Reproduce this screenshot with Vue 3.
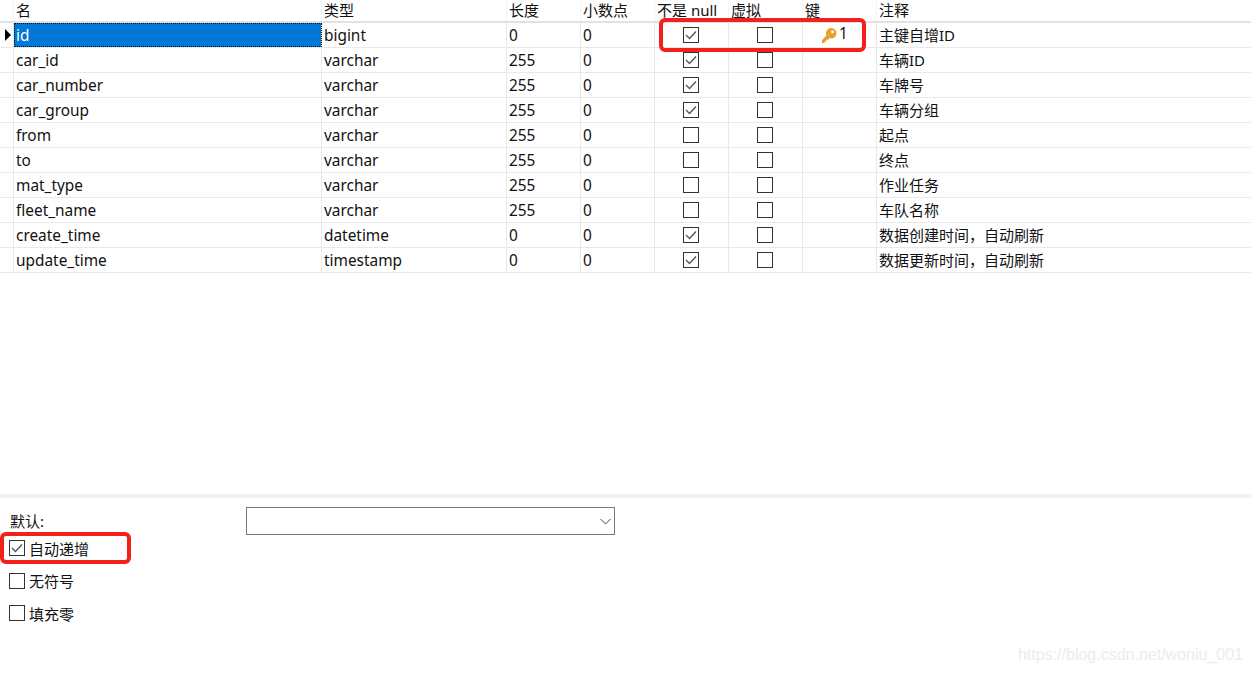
<script setup>
const headers = ['名', '类型', '长度', '小数点', '不是 null', '虚拟', '键', '注释']
const rows = [
  { name: 'id', type: 'bigint', len: 0, notNull: true, key: true, note: '主键自增ID' },
  { name: 'car_id', type: 'varchar', len: 255, notNull: true, note: '车辆ID' },
  { name: 'car_number', type: 'varchar', len: 255, notNull: true, note: '车牌号' },
  { name: 'car_group', type: 'varchar', len: 255, notNull: true, note: '车辆分组' },
  { name: 'from', type: 'varchar', len: 255, notNull: false, note: '起点' },
  { name: 'to', type: 'varchar', len: 255, notNull: false, note: '终点' },
  { name: 'mat_type', type: 'varchar', len: 255, notNull: false, note: '作业任务' },
  { name: 'fleet_name', type: 'varchar', len: 255, notNull: false, note: '车队名称' },
  { name: 'create_time', type: 'datetime', len: 0, notNull: true, note: '数据创建时间，自动刷新' },
  { name: 'update_time', type: 'timestamp', len: 0, notNull: true, note: '数据更新时间，自动刷新' },
]
const options = [
  { label: '自动递增', checked: true },
  { label: '无符号', checked: false },
  { label: '填充零', checked: false },
]
</script>

<template>
  <div class="page">
    <section class="grid">
      <div class="row head">
        <div class="cell marker"></div>
        <div v-for="h in headers" :key="h" class="cell">{{ h }}</div>
      </div>
      <div v-for="(r, i) in rows" :key="r.name" class="row">
        <div class="cell marker"><span v-if="i === 0" class="arrow"></span></div>
        <div class="cell latin" :class="{ selected: i === 0 }">{{ r.name }}</div>
        <div class="cell latin">{{ r.type }}</div>
        <div class="cell latin">{{ r.len }}</div>
        <div class="cell latin">0</div>
        <div class="cell center">
          <span class="box">
            <svg v-if="r.notNull" width="14" height="14" viewBox="0 0 14 14"><path d="M2 7 L5.5 10.5 L12 3.5" fill="none" stroke="#555" stroke-width="1.4" /></svg>
          </span>
        </div>
        <div class="cell center"><span class="box"></span></div>
        <div class="cell keycell">
          <template v-if="r.key">
            <svg class="key" width="16" height="17" viewBox="0 0 16 17">
              <path fill="#e8a02c" fill-rule="evenodd" d="M10.3 1a5.2 5.2 0 0 1 0 10.4c-.6 0-1.2-.1-1.7-.3L7 12.7H5.4v1.6H3.8V16H1V13.3L5.4 8.2A5.2 5.2 0 0 1 10.3 1Zm1.3 2.3a1.5 1.5 0 1 0 0 3 1.5 1.5 0 0 0 0-3Z" />
            </svg>
            <span class="keynum">1</span>
          </template>
        </div>
        <div class="cell">{{ r.note }}</div>
      </div>
    </section>

    <section class="panel">
      <div class="default-row">
        <span class="default-label">默认:</span>
        <div class="select">
          <svg width="11" height="7" viewBox="0 0 11 7"><path d="M0.5 1 L5.5 6 L10.5 1" fill="none" stroke="#444" stroke-width="1" /></svg>
        </div>
      </div>
      <div class="options">
        <label v-for="o in options" :key="o.label" class="option">
          <span class="box">
            <svg v-if="o.checked" width="14" height="14" viewBox="0 0 14 14"><path d="M2 7 L5.5 10.5 L12 3.5" fill="none" stroke="#555" stroke-width="1.4" /></svg>
          </span>
          <span>{{ o.label }}</span>
        </label>
      </div>
    </section>

    <div class="mark mark-row"></div>
    <div class="mark mark-auto"></div>
    <div class="watermark">https://blog.csdn.net/woniu_001</div>
  </div>
</template>

<style>
html, body { margin: 0; background: #fff; overflow: hidden; }
</style>

<style scoped>
.page {
  position: relative;
  width: 1251px;
  height: 673px;
  background: #fff;
  color: #111;
  font-family: "Noto Sans", "Noto Sans CJK SC", sans-serif;
  font-size: 15px;
  overflow: hidden;
}
.grid { height: 494px; }
.row {
  display: grid;
  grid-template-columns: 14px 308px 185px 74px 74px 74px 74px 74px 1fr;
  height: 25px;
  box-sizing: border-box;
  border-bottom: 1px solid #e9e9e9;
}
.row.head { height: 23px; border-bottom: 2px solid #e2e2e2; }
.cell {
  box-sizing: border-box;
  border-right: 1px solid #e9e9e9;
  padding-left: 2px;
  line-height: 24px;
  white-space: nowrap;
  overflow: hidden;
}
.latin { font-size: 15.4px; line-height: 26px; }
.head .cell { line-height: 21px; border-right-color: #f4f4f4; }
.cell:last-child { border-right: 0; }
.marker { padding: 0; position: relative; }
.arrow {
  position: absolute;
  left: 5px;
  top: 6px;
  border-left: 6px solid #000;
  border-top: 6px solid transparent;
  border-bottom: 6px solid transparent;
}
.selected {
  background: #0078d7;
  color: #fff;
  outline: 1px dotted #111;
  outline-offset: -1px;
}
.center { display: flex; align-items: center; justify-content: center; padding: 0 1px 0 0; }
.box {
  display: inline-block;
  flex: none;
  box-sizing: border-box;
  width: 16px;
  height: 16px;
  border: 1px solid #333;
  background: #fff;
}
.box svg { display: block; }
.keycell { display: flex; align-items: center; padding-left: 18px; }
.key { flex: none; }
.keynum { margin-left: 2px; position: relative; top: -1px; font-size: 15.4px; }

.panel {
  border-top: 4px solid #f0f0f0;
  padding: 9px 0 0 9px;
}
.default-row { display: flex; align-items: flex-start; height: 31px; }
.default-label { width: 236px; margin: 4px 0 0 1px; line-height: 20px; }
.select {
  box-sizing: border-box;
  width: 369px;
  height: 28px;
  border: 1px solid #7a7a7a;
  display: flex;
  align-items: center;
  justify-content: flex-end;
  padding-right: 3px;
  background: #fff;
}
.options { display: flex; flex-direction: column; gap: 12.5px; }
.option { display: flex; align-items: center; gap: 4px; height: 20px; }

.mark {
  position: absolute;
  box-sizing: border-box;
  border: 4px solid #f4201c;
  border-radius: 6px;
  pointer-events: none;
}
.mark-row { left: 659px; top: 18px; width: 207px; height: 34px; }
.mark-auto { left: 0; top: 532px; width: 131px; height: 32px; }
.watermark {
  position: absolute;
  right: 8px;
  top: 646px;
  font-family: "Liberation Sans", sans-serif;
  font-size: 16px;
  color: #ececec;
}
</style>
